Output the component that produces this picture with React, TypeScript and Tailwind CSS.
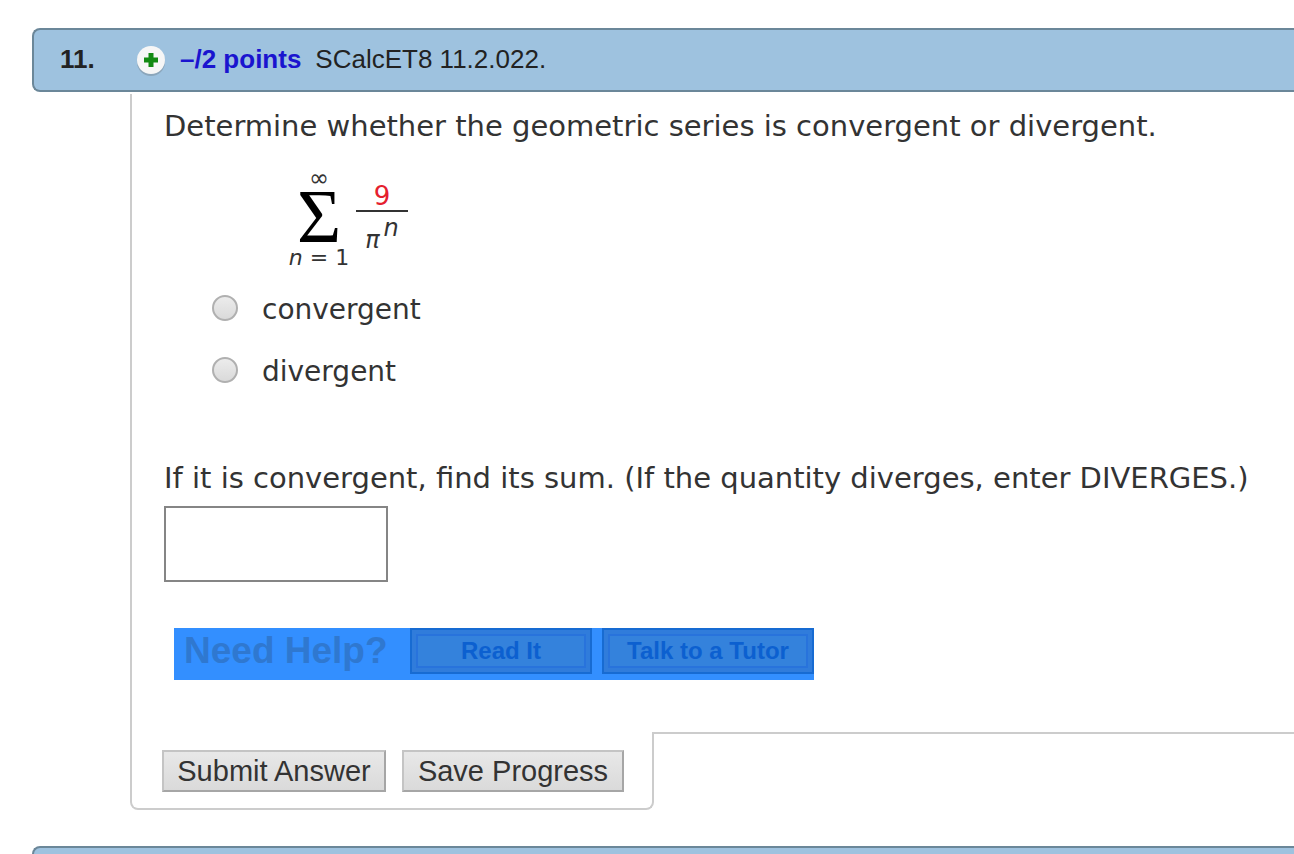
import { useState, type ReactNode } from "react"

const OPTIONS = [
  { id: "convergent", label: "convergent" },
  { id: "divergent", label: "divergent" },
]

function PlusBadge() {
  return (
    <svg width="30" height="32" viewBox="0 0 30 32" aria-hidden>
      <circle cx="15" cy="17" r="14" fill="#7f93a3" opacity="0.6" />
      <circle cx="15" cy="15" r="14" fill="#f6f6f6" />
      <path d="M12.500 8h5v4.500h4.500v5h-4.500v4.500h-5v-4.500H8v-5h4.500z" fill="#128a12" />
    </svg>
  )
}

function HeaderBar({ children }: { children?: ReactNode }) {
  return (
    <header className="flex h-16 shrink-0 items-center rounded-l-lg border-2 border-r-0 border-[#6b8799] bg-[#9ec2df] pb-[2px] pl-[26px] font-['Liberation_Sans',sans-serif] text-[26px] text-[#222]">
      {children}
    </header>
  )
}

// sum from n = 1 to infinity of 9 / pi^n
function Series() {
  return (
    <div className="ml-[122px] flex items-center gap-1 text-[24px] leading-6">
      <div className="flex w-[66px] flex-col items-center">
        <span className="h-4 leading-4">∞</span>
        <span className="h-[60px] font-['Liberation_Serif',serif] text-[76px] leading-[60px] text-black">Σ</span>
        <span className="text-[22px] whitespace-nowrap">
          <i>n</i> = 1
        </span>
      </div>
      <div className="flex w-[52px] flex-col items-center pb-1">
        <span className="pb-[2px] text-[26px] text-[#e5202e]">9</span>
        <span className="w-full border-t-2 border-[#333] pt-4 text-center italic">
          π<sup className="ml-1 text-[24px]">n</sup>
        </span>
      </div>
    </div>
  )
}

function HelpButton({ children, className }: { children: string; className: string }) {
  return (
    <button
      type="button"
      className={`h-[46px] border-2 border-[#176bd2] bg-[#307cdb] p-1 text-[24px] leading-7 font-bold text-[#0c60d0] ${className}`}
    >
      <span className="flex h-full items-center justify-center border-2 border-[#2873dc] bg-[#3482dc]">
        {children}
      </span>
    </button>
  )
}

function FormButton({ children, className }: { children: string; className: string }) {
  return (
    <button
      type="button"
      className={`h-[42px] border-2 border-t-[#c4c4c4] border-r-[#a6a6a6] border-b-[#a6a6a6] border-l-[#c4c4c4] bg-linear-to-b from-[#e8e8e8] to-[#dadada] font-['Liberation_Sans',sans-serif] text-[29px] leading-8 whitespace-nowrap text-[#333] ${className}`}
    >
      {children}
    </button>
  )
}

export default function App() {
  const [choice, setChoice] = useState("")
  const [answer, setAnswer] = useState("")

  return (
    <main className="h-screen overflow-hidden bg-white pt-7 pl-8 font-['DejaVu_Sans',sans-serif] text-[#333]">
      <HeaderBar>
        <h2 className="w-[76px] font-bold">11.</h2>
        <button type="button" aria-label="Expand question" className="mt-1 mr-[14px]">
          <PlusBadge />
        </button>
        <a href="#points" className="mr-[14px] font-bold text-[#1a14cf]">
          –/2 points
        </a>
        <span>SCalcET8 11.2.022.</span>
      </HeaderBar>

      <section className="mt-[2px] ml-[98px]">
        <div className="border-l-2 border-[#ccc] pt-3 pb-[52px] pl-8 text-[29px] leading-10 whitespace-nowrap">
          <p className="mb-6">Determine whether the geometric series is convergent or divergent.</p>
          <Series />

          <fieldset className="mt-5 mb-[66px] ml-12 flex flex-col gap-[22px] text-[28px] leading-10">
            {OPTIONS.map((option) => (
              <label key={option.id} htmlFor={option.id} className="flex items-center gap-6">
                <input
                  id={option.id}
                  type="radio"
                  name="series"
                  checked={choice === option.id}
                  onChange={() => setChoice(option.id)}
                  className="mb-1 size-[26px] appearance-none rounded-full border-2 border-[#b0b0b0] bg-linear-to-b from-[#ececec] to-[#dadada] checked:bg-[#888]"
                />
                {option.label}
              </label>
            ))}
          </fieldset>

          <label htmlFor="answer" className="mb-2 block">
            If it is convergent, find its sum. (If the quantity diverges, enter DIVERGES.)
          </label>
          <input
            id="answer"
            type="text"
            value={answer}
            onChange={(e) => setAnswer(e.target.value)}
            className="block h-[76px] w-[224px] border-2 border-[#858585] bg-white px-3"
          />

          <div className="mt-[46px] ml-[10px] flex h-[52px] w-[640px] items-start bg-[#338fff] font-['Liberation_Sans',sans-serif]">
            <strong className="w-[236px] pl-[10px] text-[37px] leading-[46px] text-[#2f78d0]">Need Help?</strong>
            <HelpButton className="mr-[10px] w-[182px]">Read It</HelpButton>
            <HelpButton className="w-[212px]">Talk to a Tutor</HelpButton>
          </div>
        </div>

        <div className="flex">
          <div className="flex h-[78px] w-[524px] items-start gap-4 rounded-b-lg border-2 border-t-0 border-[#ccc] pt-[18px] pl-[30px]">
            <FormButton className="w-[224px]">Submit Answer</FormButton>
            <FormButton className="w-[222px]">Save Progress</FormButton>
          </div>
          <div className="grow border-t-2 border-[#ccc]" />
        </div>
      </section>

      <div className="mt-9">
        <HeaderBar />
      </div>
    </main>
  )
}
